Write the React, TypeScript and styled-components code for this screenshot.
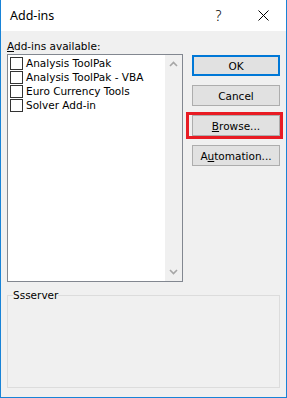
import styled, { createGlobalStyle } from "styled-components";

const GlobalStyle = createGlobalStyle`
  html, body {
    margin: 0;
    padding: 0;
    background: #ffffff;
  }
  * {
    box-sizing: border-box;
  }
`;

const addins = ["Analysis ToolPak", "Analysis ToolPak - VBA", "Euro Currency Tools", "Solver Add-in"];

const Chevron = ({ up }: { up?: boolean }) => (
  <svg width="9" height="6" viewBox="0 0 9 6">
    <path
      d={up ? "M1 5 L4.5 1.5 L8 5" : "M1 1 L4.5 4.5 L8 1"}
      fill="none"
      stroke="#a6a6a6"
      strokeWidth="1.6"
    />
  </svg>
);

export default function App() {
  return (
    <>
      <GlobalStyle />
      <Window>
        <TitleBar>
          <Title>Add-ins</Title>
          <TitleButton>?</TitleButton>
          <TitleButton>
            <svg width="11" height="11" viewBox="0 0 11 11">
              <path d="M0.5 0.5 L10.5 10.5 M10.5 0.5 L0.5 10.5" stroke="#000" strokeWidth="1" />
            </svg>
          </TitleButton>
        </TitleBar>
        <Body>
          <TopRow>
            <LeftColumn>
              <Label>
                <u>A</u>dd-ins available:
              </Label>
              <ListBox>
                <Items>
                  {addins.map((name) => (
                    <Item key={name}>
                      <CheckBox />
                      {name}
                    </Item>
                  ))}
                </Items>
                <ScrollBar>
                  <Chevron up />
                  <Chevron />
                </ScrollBar>
              </ListBox>
            </LeftColumn>
            <ButtonColumn>
              <Button $primary>OK</Button>
              <Button>Cancel</Button>
              <Button $highlight>
                <u>B</u>rowse...
              </Button>
              <Button>
                A<u>u</u>tomation...
              </Button>
            </ButtonColumn>
          </TopRow>
          <GroupBox>
            <Legend>Ssserver</Legend>
          </GroupBox>
        </Body>
      </Window>
    </>
  );
}

const Window = styled.div`
  width: 287px;
  height: 398px;
  border: 1px solid #1883d7;
  border-top: none;
  background: #f0f0f0;
  display: flex;
  flex-direction: column;
  font-family: "DejaVu Sans", sans-serif;
  font-size: 10.5px;
  color: #000;
`;

const TitleBar = styled.div`
  height: 31px;
  background: #ffffff;
  display: flex;
  align-items: center;
  padding-left: 9px;
`;

const Title = styled.div`
  flex: 1;
  font-family: "Noto Sans", "Open Sans", sans-serif;
  font-size: 12.5px;
  padding-bottom: 1px;
`;

const TitleButton = styled.div`
  width: 45px;
  height: 31px;
  display: flex;
  align-items: center;
  justify-content: center;
  font-family: "Noto Sans", sans-serif;
  font-size: 14px;
  font-weight: 300;
  padding-bottom: 1px;
`;

const Body = styled.div`
  flex: 1;
  padding: 0 6px;
  display: flex;
  flex-direction: column;
`;

const TopRow = styled.div`
  display: flex;
`;

const LeftColumn = styled.div`
  width: 176px;
  display: flex;
  flex-direction: column;
`;

const Label = styled.div`
  height: 15px;
  margin-top: 8px;
  line-height: 15px;
  white-space: nowrap;
`;

const ListBox = styled.div`
  height: 228px;
  border: 1px solid #828790;
  background: #ffffff;
  display: flex;
`;

const Items = styled.div`
  flex: 1;
  padding: 1px 0 0 2px;
`;

const Item = styled.div`
  height: 14px;
  display: flex;
  align-items: center;
  gap: 3px;
  white-space: nowrap;
`;

const CheckBox = styled.span`
  width: 13px;
  height: 13px;
  border: 1px solid #333333;
  background: #ffffff;
  flex-shrink: 0;
`;

const ScrollBar = styled.div`
  width: 17px;
  background: #f0f0f0;
  display: flex;
  flex-direction: column;
  justify-content: space-between;
  align-items: center;
  padding: 6px 0 6px;
`;

const ButtonColumn = styled.div`
  margin-left: 9px;
  margin-top: 24px;
  display: flex;
  flex-direction: column;
  gap: 9px;
`;

const Button = styled.div<{ $primary?: boolean; $highlight?: boolean }>`
  position: relative;
  width: 88px;
  height: 21px;
  background: #e1e1e1;
  border: ${({ $primary }) => ($primary ? "2px solid #0078d7" : "1px solid #adadad")};
  display: flex;
  align-items: center;
  justify-content: center;
  white-space: nowrap;

  &::after {
    content: "";
    display: ${({ $highlight }) => ($highlight ? "block" : "none")};
    position: absolute;
    top: -4px;
    bottom: -4px;
    left: -7px;
    right: -4px;
    border: 3px solid #e81b23;
  }
`;

const GroupBox = styled.fieldset`
  margin: 7px 0 0 0;
  padding: 0 0 0 5px;
  width: 273px;
  height: 99px;
  border: 1px solid #dcdcdc;
`;

const Legend = styled.legend`
  padding: 0;
  line-height: 13px;
`;
